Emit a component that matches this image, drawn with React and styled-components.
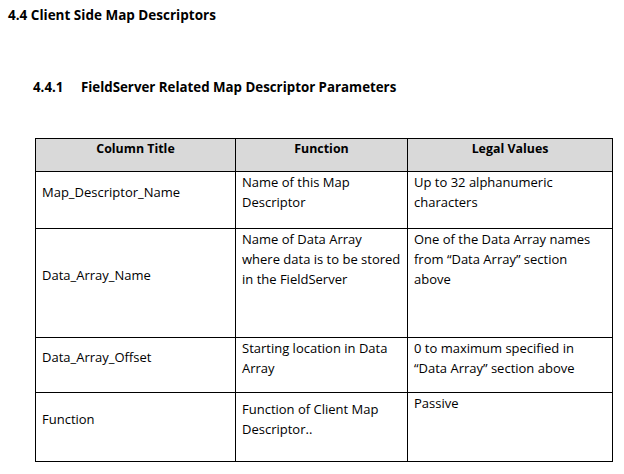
import React from "react";
import styled, { createGlobalStyle } from "styled-components";

const GlobalStyle = createGlobalStyle`
  html, body {
    margin: 0;
    padding: 0;
    background: #ffffff;
  }
  body {
    font-family: "Open Sans", "Liberation Sans", sans-serif;
    color: #000000;
  }
`;

const Page = styled.div`
  width: 624px;
  height: 474px;
  overflow: hidden;
  padding: 6px 0 0 8px;
  box-sizing: border-box;
`;

const SectionTitle = styled.h2`
  margin: 0;
  font-size: 13.5px;
  font-weight: 700;
  line-height: 18px;
`;

const SubTitle = styled.h3`
  margin: 54px 0 0 25px;
  display: flex;
  font-size: 13.3px;
  font-weight: 700;
  line-height: 18px;
`;

const SubNumber = styled.span`
  width: 48px;
`;

const Table = styled.table`
  margin: 42px 0 0 27px;
  border-collapse: collapse;
  table-layout: fixed;
  width: 577px;
  font-size: 13px;
`;

const HeadCell = styled.th`
  background: #d9d9d9;
  border: 1px solid #000;
  padding: 0 6px 12px;
  font-size: 12.4px;
  font-weight: 700;
  line-height: 20px;
  text-align: center;
  vertical-align: middle;
`;

const Cell = styled.td`
  border: 1px solid #000;
  padding: ${(p) => (p.$align === "top" ? "0 6px" : "0 6px 16px")};
  vertical-align: ${(p) => (p.$align === "top" ? "top" : "middle")};
  line-height: 20px;
`;

const Row = styled.tr`
  height: ${(p) => p.$h}px;
`;

const rows = [
  {
    h: 57,
    cells: [
      ["Map_Descriptor_Name", "mid"],
      ["Name of this Map Descriptor", "top"],
      ["Up to 32 alphanumeric characters", "top"],
    ],
  },
  {
    h: 109,
    cells: [
      ["Data_Array_Name", "mid"],
      ["Name of Data Array where data is to be stored in the FieldServer", "top"],
      ["One of the Data Array names from \u201cData Array\u201d section above", "top"],
    ],
  },
  {
    h: 55,
    cells: [
      ["Data_Array_Offset", "mid"],
      ["Starting location in Data Array", "top"],
      ["0 to maximum specified in \u201cData Array\u201d section above", "top"],
    ],
  },
  {
    h: 69,
    cells: [
      ["Function", "mid"],
      ["Function of Client Map Descriptor..", "mid"],
      ["Passive", "top"],
    ],
  },
];

export default function App() {
  return (
    <Page>
      <GlobalStyle />
      <SectionTitle>4.4 Client Side Map Descriptors</SectionTitle>
      <SubTitle>
        <SubNumber>4.4.1</SubNumber>
        FieldServer Related Map Descriptor Parameters
      </SubTitle>
      <Table>
        <colgroup>
          <col style={{ width: 200 }} />
          <col style={{ width: 172 }} />
          <col style={{ width: 205 }} />
        </colgroup>
        <thead>
          <Row $h={33}>
            <HeadCell>Column Title</HeadCell>
            <HeadCell>Function</HeadCell>
            <HeadCell>Legal Values</HeadCell>
          </Row>
        </thead>
        <tbody>
          {rows.map((r, i) => (
            <Row key={i} $h={r.h}>
              {r.cells.map(([text, align], j) => (
                <Cell key={j} $align={align}>
                  {text}
                </Cell>
              ))}
            </Row>
          ))}
        </tbody>
      </Table>
    </Page>
  );
}
